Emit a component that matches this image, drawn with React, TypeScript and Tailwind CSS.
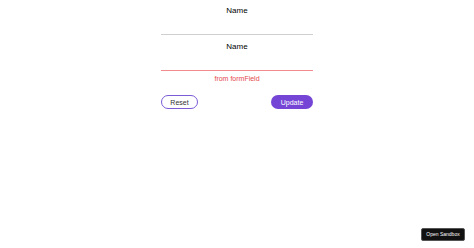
import React from "react";

const Field = ({ error }: { error?: string }) => (
  <div className="flex flex-col items-center">
    <label className="text-[8px] leading-[10px] text-black">Name</label>
    <div
      className={
        "mt-[18px] h-px w-full " + (error ? "bg-[#f28b8b]" : "bg-[#cfcfcf]")
      }
    />
    {error && (
      <span className="mt-[3px] text-[7px] leading-[9px] text-[#e5484d]">
        {error}
      </span>
    )}
  </div>
);

export default function App() {
  return (
    <div className="relative h-[248px] w-[474px] bg-white font-['Liberation_Sans',Arial,sans-serif]">
      <div className="mx-auto flex w-[152px] flex-col pt-[6px]">
        <Field />
        <div className="mt-[7px]">
          <Field error="from formField" />
        </div>
        <div className="mt-[12px] flex items-center justify-between">
          <button className="h-[14px] w-[37px] rounded-full border border-[#7b5bd6] bg-white text-[7px] leading-none text-[#333]">
            Reset
          </button>
          <button className="h-[14px] w-[42px] rounded-full bg-[#7546d6] text-[7px] leading-none text-white">
            Update
          </button>
        </div>
      </div>
      <button className="absolute bottom-[7px] right-[9px] h-[13px] w-[44px] rounded-[2px] border border-[#555] bg-[#111] text-[5px] leading-none text-white">
        Open Sandbox
      </button>
    </div>
  );
}
